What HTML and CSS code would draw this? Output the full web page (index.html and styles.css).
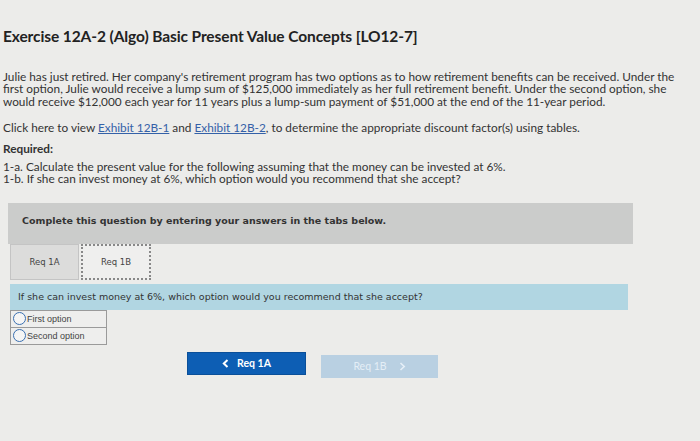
FILE: index.html
```html
<!DOCTYPE html>
<html>
<head>
<meta charset="utf-8">
<link rel="stylesheet" href="styles.css">
</head>
<body>
<div class="page">
  <h1 class="title">Exercise 12A-2 (Algo) Basic Present Value Concepts [LO12-7]</h1>
  <p class="para lines">Julie has just retired. Her company's retirement program has two options as to how retirement benefits can be received. Under the
first option, Julie would receive a lump sum of $125,000 immediately as her full retirement benefit. Under the second option, she
would receive $12,000 each year for 11 years plus a lump-sum payment of $51,000 at the end of the 11-year period.</p>
  <p class="para click">Click here to view <a class="link">Exhibit 12B-1</a> and <a class="link">Exhibit 12B-2</a>, to determine the appropriate discount factor(s) using tables.</p>
  <div class="required">
    <div class="req-head">Required:</div>
    <div class="req-lines">1-a. Calculate the present value for the following assuming that the money can be invested at 6%.
1-b. If she can invest money at 6%, which option would you recommend that she accept?</div>
  </div>
  <div class="question">
    <div class="banner">Complete this question by entering your answers in the tabs below.</div>
    <div class="tabs">
      <div class="tab tab-a">Req 1A</div>
      <div class="tab tab-b">Req 1B</div>
    </div>
    <div class="prompt">If she can invest money at 6%, which option would you recommend that she accept?</div>
    <div class="options">
      <div class="opt"><span class="radio"></span>First option</div>
      <div class="opt"><span class="radio"></span>Second option</div>
    </div>
    <div class="nav">
      <div class="btn btn-prev"><svg class="chev" width="7" height="9" viewBox="0 0 7 9"><polyline points="5.5,1 1.8,4.5 5.5,8" fill="none" stroke="#ffffff" stroke-width="2"/></svg><span>Req 1A</span></div>
      <div class="btn btn-next"><span>Req 1B</span><svg class="chev" width="7" height="9" viewBox="0 0 7 9"><polyline points="1.5,1 5.2,4.5 1.5,8" fill="none" stroke="#e6eff7" stroke-width="1.6"/></svg></div>
    </div>
  </div>
</div>
</body>
</html>
```
FILE: styles.css
```css
html, body {
  margin: 0;
  padding: 0;
  background: #ececea;
}
.page {
  width: 700px;
  height: 441px;
  box-sizing: border-box;
  padding: 26px 0 0 3px;
  font-family: Lato, "Open Sans", sans-serif;
  color: #333;
  overflow: hidden;
}
.title {
  margin: 0;
  font-size: 15.5px;
  font-weight: 700;
  color: #222;
  line-height: 20px;
  letter-spacing: -0.1px;
}
.para {
  margin: 25px 0 0 0;
  font-size: 11.8px;
  line-height: 12.3px;
  white-space: nowrap;
}
.lines {
  white-space: pre-line;
}
.click {
  margin-top: 14px;
}
.link {
  color: #3461a8;
  text-decoration: underline;
}
.required {
  margin-top: 8px;
  font-size: 11.8px;
}
.req-head {
  font-weight: 700;
  line-height: 13px;
  margin-bottom: 6px;
}
.req-lines {
  line-height: 12.3px;
  white-space: pre-line;
}
.question {
  margin-top: 17px;
  font-family: "DejaVu Sans", Verdana, sans-serif;
}
.banner {
  margin-left: 5px;
  width: 625px;
  height: 41px;
  box-sizing: border-box;
  background: #cbcccb;
  padding: 12px 0 0 14px;
  font-size: 9.5px;
  font-weight: 700;
  color: #333;
}
.tabs {
  display: flex;
  margin: 0 0 0 7px;
}
.tab {
  width: 69px;
  height: 36px;
  box-sizing: border-box;
  font-size: 8.5px;
  color: #444;
  display: flex;
  align-items: center;
  justify-content: center;
}
.tab-a {
  background: #dcdcdb;
  border: 1px solid #c4c4c4;
}
.tab-b {
  margin-left: 2px;
  width: 70px;
  background: #efefee;
  border: 2px dotted #888;
}
.prompt {
  margin: 4px 0 0 7px;
  width: 618px;
  height: 26px;
  box-sizing: border-box;
  background: #b1d6e2;
  padding: 7px 0 0 8px;
  font-size: 9.5px;
  color: #333;
}
.options {
  margin: 0 0 0 7px;
  width: 95px;
  border: 1px solid #9a9a9a;
  background: #eeeeed;
}
.opt {
  height: 16px;
  display: flex;
  align-items: center;
  font-size: 9px;
  color: #444;
  font-family: "Liberation Sans", Arial, sans-serif;
}
.opt + .opt {
  border-top: 1px solid #9a9a9a;
}
.radio {
  width: 13px;
  height: 13px;
  border: 1.5px solid #3a6fb0;
  border-radius: 50%;
  box-sizing: border-box;
  margin: 0 1px 0 2px;
  background: #f5f5f5;
}
.nav {
  display: flex;
  gap: 15px;
  margin: 7px 0 0 184px;
  align-items: flex-start;
}
.btn {
  width: 119px;
  height: 23px;
  display: flex;
  align-items: center;
  justify-content: center;
  gap: 8px;
  font-family: Lato, "Open Sans", sans-serif;
  font-size: 10.5px;
  font-weight: 700;
  box-sizing: border-box;
}
.btn-prev {
  background: #0d5eb4;
  color: #fff;
  border: 1px solid #0a4f99;
}
.btn-next {
  width: 117px;
  background: #b9d0e2;
  color: #e4eef6;
  margin-top: 3px;
  gap: 12px;
  font-weight: 400;
}
.chev {
  display: block;
}
```
